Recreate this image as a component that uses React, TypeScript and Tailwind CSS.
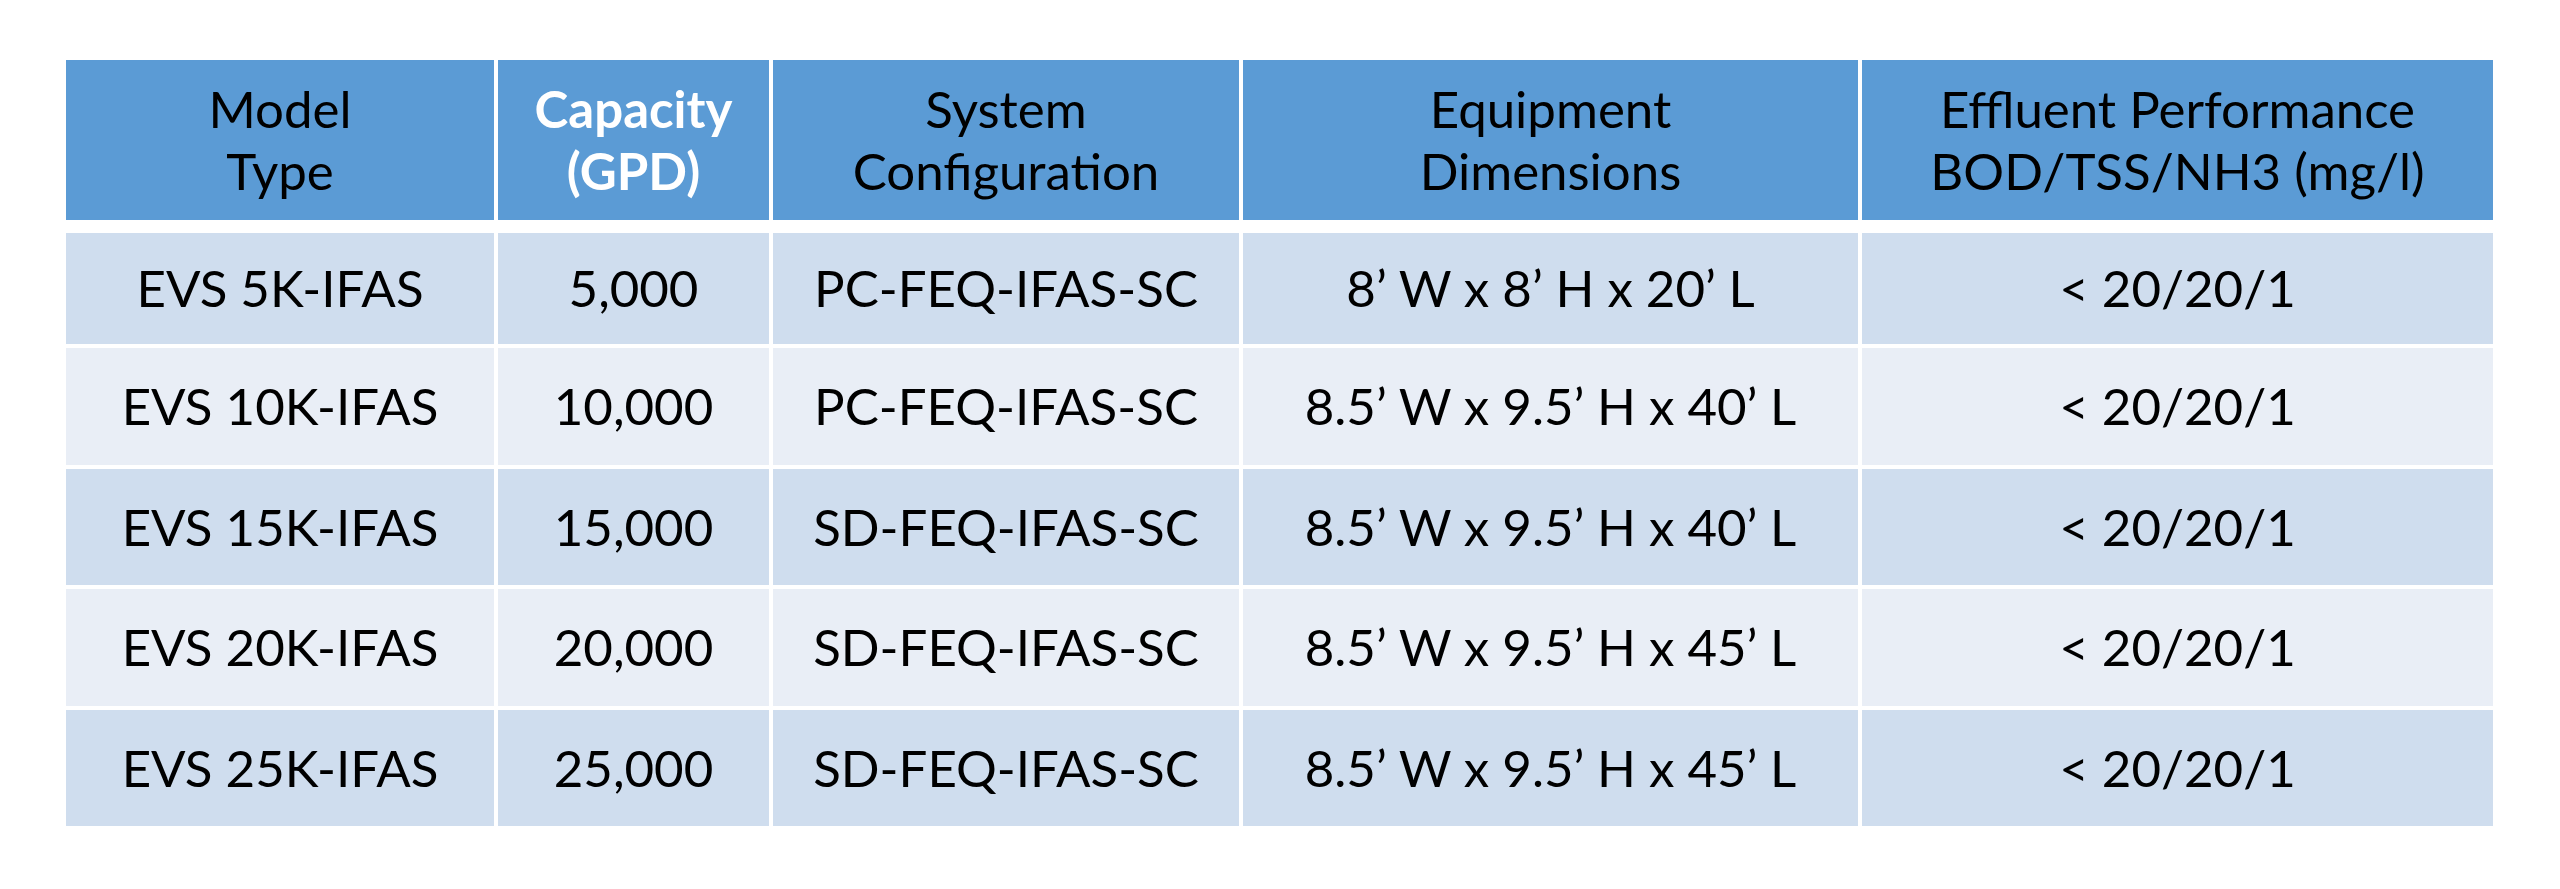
const rows = [
  { model: "EVS 5K-IFAS", cap: "5,000", config: "PC-FEQ-IFAS-SC", dims: "8’ W x 8’ H x 20’ L", h: "h-[111px]" },
  { model: "EVS 10K-IFAS", cap: "10,000", config: "PC-FEQ-IFAS-SC", dims: "8.5’ W x 9.5’ H x 40’ L", h: "h-[117px]" },
  { model: "EVS 15K-IFAS", cap: "15,000", config: "SD-FEQ-IFAS-SC", dims: "8.5’ W x 9.5’ H x 40’ L", h: "h-[116px]" },
  { model: "EVS 20K-IFAS", cap: "20,000", config: "SD-FEQ-IFAS-SC", dims: "8.5’ W x 9.5’ H x 45’ L", h: "h-[117px]" },
  { model: "EVS 25K-IFAS", cap: "25,000", config: "SD-FEQ-IFAS-SC", dims: "8.5’ W x 9.5’ H x 45’ L", h: "h-[116px]" },
];

const cols = "grid grid-cols-[428px_271px_466px_615px_631px] gap-x-[4px]";

function HeadCell({ children, bold }: { children: React.ReactNode; bold?: boolean }) {
  return (
    <div
      className={`bg-[#5b9bd5] flex items-center justify-center text-center leading-[62px] ${
        bold ? "text-white font-bold" : "text-black"
      }`}
    >
      <div>{children}</div>
    </div>
  );
}

export default function App() {
  return (
    <div className="w-[2560px] h-[889px] bg-white pl-[66px] pt-[60px] font-['Lato',sans-serif] text-[51px]">
      <div className={`${cols} h-[160px]`}>
        <HeadCell>
          Model
          <br />
          Type
        </HeadCell>
        <HeadCell bold>
          Capacity
          <br />
          (GPD)
        </HeadCell>
        <HeadCell>
          System
          <br />
          Configuration
        </HeadCell>
        <HeadCell>
          Equipment
          <br />
          Dimensions
        </HeadCell>
        <HeadCell>
          Effluent Performance
          <br />
          BOD/TSS/NH3 (mg/l)
        </HeadCell>
      </div>
      <div className="mt-[13px] flex flex-col gap-y-[4px]">
        {rows.map((r, i) => {
          const bg = i % 2 === 0 ? "bg-[#cfddee]" : "bg-[#e9eef6]";
          return (
            <div key={r.model} className={`${cols} ${r.h} text-black`}>
              <div className={`${bg} flex items-center justify-center`}>{r.model}</div>
              <div className={`${bg} flex items-center justify-center`}>{r.cap}</div>
              <div className={`${bg} flex items-center justify-center`}>{r.config}</div>
              <div className={`${bg} flex items-center justify-center`}>{r.dims}</div>
              <div className={`${bg} flex items-center justify-center`}>&lt; 20/20/1</div>
            </div>
          );
        })}
      </div>
    </div>
  );
}
